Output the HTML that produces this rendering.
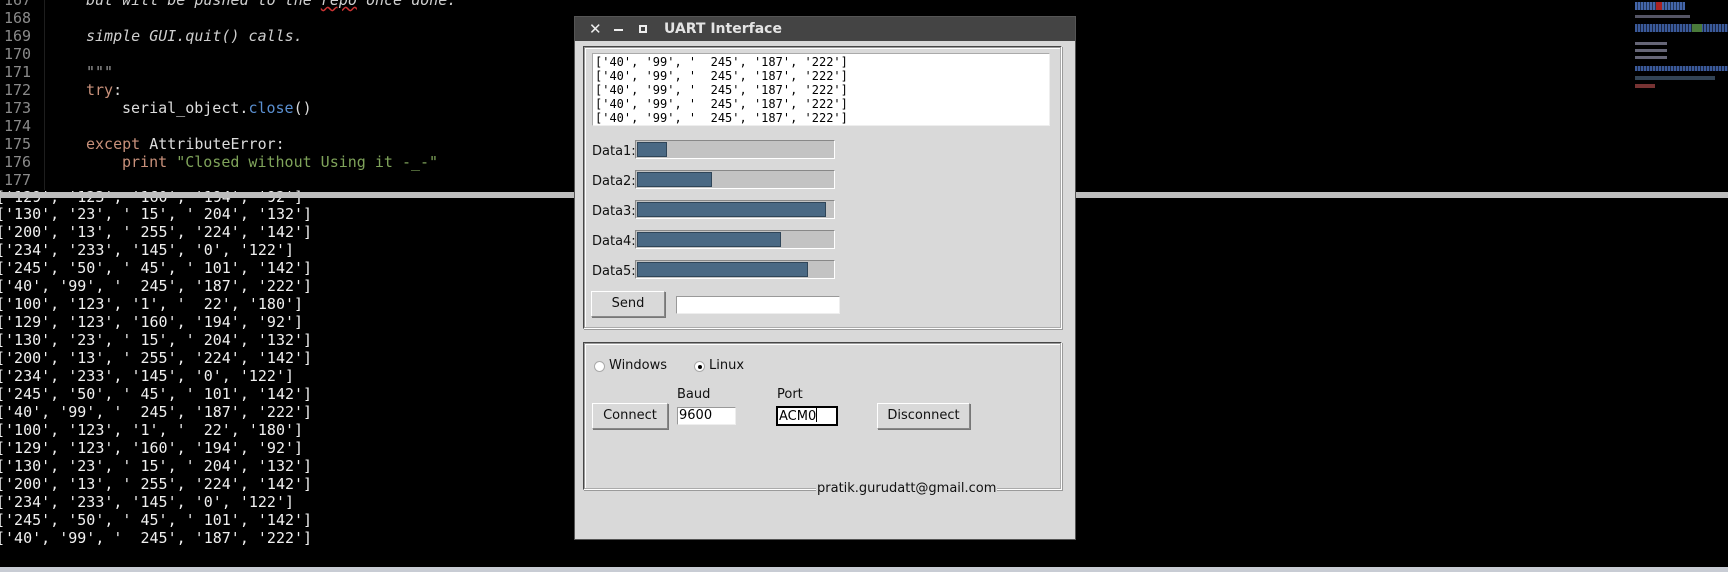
<!DOCTYPE html>
<html><head><meta charset="utf-8"><style>
*{margin:0;padding:0;box-sizing:border-box}
body{width:1728px;height:572px;background:#000;position:relative;overflow:hidden;font-family:"DejaVu Sans","Liberation Sans",sans-serif}
.a{position:absolute;white-space:pre}
.mono{font-family:"DejaVu Sans Mono","Liberation Mono",monospace}
.ln{color:#8a8a8a;font-size:15px;left:4px}
.code{font-size:15px;color:#dcdcdc}
.it{font-style:italic;color:#cfcfcf}
.kw{color:#c8907a}.fn{color:#5a8fd0}.st{color:#7fa35a}
.term{color:#f0f0f0;font-size:15px;left:-4px}
.win{position:absolute;left:574px;top:16px;width:502px;height:524px;background:#d9d9d9;border:1px solid #555}
.tb{position:absolute;left:0;top:0;width:100%;height:24px;background:#444}
.frame{position:absolute;border:2px groove #f4f4f4;border-color:#9a9a9a #fff #fff #9a9a9a;box-shadow:inset 1px 1px 0 #fff,1px 1px 0 #9a9a9a}
.lbl{font-size:13px;color:#111}
.bar{position:absolute;left:50px;width:200px;height:19px;background:#c3c3c3;border:1px solid #888;border-right-color:#fff;border-bottom-color:#fff}
.bar i{position:absolute;left:1px;top:1px;bottom:1px;background:#4a6984;border:1px solid #2f4558}
.btn{position:absolute;height:26px;background:#d9d9d9;border:1px solid #888;border-top-color:#fff;border-left-color:#fff;box-shadow:1px 1px 0 #777;font-size:13px;color:#111;text-align:center;line-height:24px}
.ent{position:absolute;white-space:pre;background:#fff;border:1px solid #999;border-right-color:#eee;border-bottom-color:#eee;font-size:13px;line-height:16px;padding-left:1px;color:#000}
</style></head><body>
<!-- editor -->
<div class="a ln mono" style="top:-9px">167</div>
<div class="a code mono it" style="top:-9px;left:86px">but will be pushed to the <span style="text-decoration:underline wavy #c33">repo</span> once done.</div>
<div class="a ln mono" style="top:9px">168</div>
<div class="a ln mono" style="top:27px">169</div>
<div class="a code mono it" style="top:27px;left:86px">simple GUI.quit() calls.</div>
<div class="a ln mono" style="top:45px">170</div>
<div class="a ln mono" style="top:63px">171</div>
<div class="a code mono" style="top:63px;left:86px;color:#999">"""</div>
<div class="a ln mono" style="top:81px">172</div>
<div class="a code mono" style="top:81px;left:86px"><span class="kw">try</span>:</div>
<div class="a ln mono" style="top:99px">173</div>
<div class="a code mono" style="top:99px;left:122px">serial_object.<span class="fn">close</span>()</div>
<div class="a ln mono" style="top:117px">174</div>
<div class="a ln mono" style="top:135px">175</div>
<div class="a code mono" style="top:135px;left:86px"><span class="kw">except</span> AttributeError:</div>
<div class="a ln mono" style="top:153px">176</div>
<div class="a code mono" style="top:153px;left:122px"><span class="kw">print</span> <span class="st">"Closed without Using it -_-"</span></div>
<div class="a ln mono" style="top:171px">177</div>
<div class="a" style="left:44px;top:0;width:1px;height:190px;background:#1e1e1e"></div>
<!-- terminal -->
<div class="a" style="left:0;top:190px;width:1728px;height:20px;background:#000"></div>
<div class="a term mono" style="top:188px">['129', '123', '160', '194', '92']</div>
<div class="a" style="left:0;top:192px;width:1728px;height:6px;background:#bdbdbd"></div>
<div class="a term mono" style="top:205px;line-height:18px">['130', '23', ' 15', ' 204', '132']
['200', '13', ' 255', '224', '142']
['234', '233', '145', '0', '122']
['245', '50', ' 45', ' 101', '142']
['40', '99', '  245', '187', '222']
['100', '123', '1', '  22', '180']
['129', '123', '160', '194', '92']
['130', '23', ' 15', ' 204', '132']
['200', '13', ' 255', '224', '142']
['234', '233', '145', '0', '122']
['245', '50', ' 45', ' 101', '142']
['40', '99', '  245', '187', '222']
['100', '123', '1', '  22', '180']
['129', '123', '160', '194', '92']
['130', '23', ' 15', ' 204', '132']
['200', '13', ' 255', '224', '142']
['234', '233', '145', '0', '122']
['245', '50', ' 45', ' 101', '142']
['40', '99', '  245', '187', '222']</div>
<div class="a" style="left:0;top:567px;width:1728px;height:5px;background:#c8ccd4"></div>
<!-- minimap -->
<div class="a" style="left:1635px;top:2px;width:50px;height:8px;background:repeating-linear-gradient(90deg,#4466aa 0 2px,#223355 2px 3px)"></div>
<div class="a" style="left:1656px;top:2px;width:6px;height:8px;background:#a22"></div>
<div class="a" style="left:1635px;top:15px;width:55px;height:3px;background:#556"></div>
<div class="a" style="left:1635px;top:24px;width:93px;height:8px;background:repeating-linear-gradient(90deg,#3a5a9a 0 2px,#1a2440 2px 3px)"></div>
<div class="a" style="left:1692px;top:24px;width:10px;height:8px;background:#4a7a3a"></div>
<div class="a" style="left:1635px;top:42px;width:32px;height:3px;background:#667"></div>
<div class="a" style="left:1635px;top:49px;width:32px;height:3px;background:#667"></div>
<div class="a" style="left:1635px;top:56px;width:32px;height:3px;background:#667"></div>
<div class="a" style="left:1635px;top:66px;width:93px;height:5px;background:repeating-linear-gradient(90deg,#3a5a9a 0 2px,#1a2440 2px 3px)"></div>
<div class="a" style="left:1635px;top:76px;width:80px;height:4px;background:#345"></div>
<div class="a" style="left:1635px;top:84px;width:20px;height:4px;background:#733"></div>
<!-- window -->
<div class="win">
 <div class="tb">
  <div class="a" style="left:14px;top:3px;color:#eee;font-size:15px;font-weight:bold">✕</div>
  <div class="a" style="left:39px;top:12px;width:9px;height:2px;background:#eee"></div>
  <div class="a" style="left:64px;top:8px;width:8px;height:8px;border:2px solid #eee"></div>
  <div class="a" style="left:89px;top:4px;color:#e4e4e4;font-size:14px;font-weight:bold">UART Interface</div>
 </div>
 <div class="frame" style="left:8px;top:29px;width:479px;height:283px">
  <div class="ent mono" style="left:7px;top:5px;width:458px;height:73px;font-size:12px;line-height:14px;padding:1px 2px;border-color:#aaa #eee #eee #aaa">['40', '99', '  245', '187', '222']
['40', '99', '  245', '187', '222']
['40', '99', '  245', '187', '222']
['40', '99', '  245', '187', '222']
['40', '99', '  245', '187', '222']</div>
  <div class="a lbl" style="left:7px;top:96px">Data1:</div><div class="bar" style="top:92px"><i style="width:30px"></i></div>
  <div class="a lbl" style="left:7px;top:126px">Data2:</div><div class="bar" style="top:122px"><i style="width:75px"></i></div>
  <div class="a lbl" style="left:7px;top:156px">Data3:</div><div class="bar" style="top:152px"><i style="width:189px"></i></div>
  <div class="a lbl" style="left:7px;top:186px">Data4:</div><div class="bar" style="top:182px"><i style="width:144px"></i></div>
  <div class="a lbl" style="left:7px;top:216px">Data5:</div><div class="bar" style="top:212px"><i style="width:171px"></i></div>
  <div class="btn" style="left:6px;top:243px;width:74px">Send</div>
  <div class="ent" style="left:91px;top:248px;width:164px;height:18px"></div>
 </div>
 <div class="frame" style="left:8px;top:325px;width:479px;height:148px">
  <div class="a" style="left:9px;top:17px;width:11px;height:11px;border-radius:50%;background:#fff;border:1px solid #aaa"></div>
  <div class="a lbl" style="left:24px;top:14px">Windows</div>
  <div class="a" style="left:109px;top:17px;width:11px;height:11px;border-radius:50%;background:#fff;border:1px solid #aaa"></div>
  <div class="a" style="left:113px;top:21px;width:4px;height:4px;border-radius:50%;background:#000"></div>
  <div class="a lbl" style="left:124px;top:14px">Linux</div>
  <div class="a lbl" style="left:92px;top:43px">Baud</div>
  <div class="a lbl" style="left:192px;top:43px">Port</div>
  <div class="btn" style="left:7px;top:59px;width:76px">Connect</div>
  <div class="ent" style="left:92px;top:63px;width:59px;height:18px">9600</div>
  <div class="ent" style="left:191px;top:62px;width:62px;height:20px;border:2px solid #000;line-height:16px">ACM0<span style="display:inline-block;width:1px;height:14px;background:#000;vertical-align:-2px"></span></div>
  <div class="btn" style="left:292px;top:59px;width:93px">Disconnect</div>
  <div class="a lbl" style="left:231px;top:137px;background:#d9d9d9;padding:0 1px">pratik.gurudatt@gmail.com</div>
 </div>
</div>
</body></html>
